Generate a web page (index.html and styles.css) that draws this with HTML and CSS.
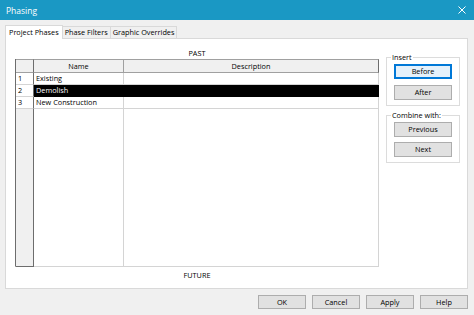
FILE: index.html
```html
<!DOCTYPE html>
<html>
<head>
<meta charset="utf-8">
<link rel="stylesheet" href="styles.css">
</head>
<body>
<div class="window">
  <div class="titlebar">
    <span class="title">Phasing</span>
    <svg class="close" width="8" height="8" viewBox="0 0 8 8"><path d="M0.5 0.5L7.5 7.5M7.5 0.5L0.5 7.5" stroke="#fff" stroke-width="1"/></svg>
  </div>
  <div class="tabs">
    <div class="tab active">Project Phases</div>
    <div class="tab">Phase Filters</div>
    <div class="tab">Graphic Overrides</div>
  </div>
  <div class="panel">
    <div class="main">
      <div class="caption">PAST</div>
      <div class="grid">
        <div class="hc corner"></div>
        <div class="hc">Name</div>
        <div class="hc last">Description</div>

        <div class="rn">1</div>
        <div class="c">Existing</div>
        <div class="c">&nbsp;</div>

        <div class="rn">2</div>
        <div class="c sel">Demolish</div>
        <div class="c sel">&nbsp;</div>

        <div class="rn">3</div>
        <div class="c">New Construction</div>
        <div class="c">&nbsp;</div>

        <div class="fill rnf"></div>
        <div class="fill"></div>
        <div class="fill"></div>
      </div>
      <div class="caption future">FUTURE</div>
    </div>
    <div class="side">
      <fieldset class="group g1">
        <legend>Insert</legend>
        <div class="btn focus">Before</div>
        <div class="btn">After</div>
      </fieldset>
      <fieldset class="group">
        <legend>Combine with:</legend>
        <div class="btn">Previous</div>
        <div class="btn">Next</div>
      </fieldset>
    </div>
  </div>
  <div class="footer">
    <div class="btn wide">OK</div>
    <div class="btn wide">Cancel</div>
    <div class="btn wide">Apply</div>
    <div class="btn wide">Help</div>
  </div>
</div>
</body>
</html>
```
FILE: styles.css
```css
html, body {
  margin: 0;
  padding: 0;
}
body {
  width: 474px;
  height: 315px;
  overflow: hidden;
  background: #f0f0f0;
  font-family: "Open Sans", "Noto Sans", sans-serif;
  font-size: 7.3px;
  color: #000;
}
.window {
  width: 474px;
  height: 315px;
  display: flex;
  flex-direction: column;
}
.titlebar {
  height: 20px;
  background: #1a98c4;
  display: flex;
  align-items: center;
  justify-content: space-between;
  padding: 0 8px 0 6px;
  box-sizing: border-box;
  flex: none;
}
.title {
  color: #fff;
  font-size: 8.5px;
}
.tabs {
  display: flex;
  align-items: flex-end;
  height: 13px;
  margin-top: 5px;
  padding-left: 5px;
  flex: none;
  position: relative;
  z-index: 1;
}
.tab {
  height: 11px;
  line-height: 11px;
  padding: 0 2px;
  border: 1px solid #d9d9d9;
  border-bottom: none;
  background: #f0f0f0;
  margin-left: -1px;
  white-space: nowrap;
}
.tab.active {
  height: 13px;
  line-height: 12px;
  background: #fff;
  margin-left: 0;
  padding: 0 3px;
  margin-bottom: -1px;
}
.panel {
  height: 251px;
  margin: 0 6px 0 5px;
  background: #fff;
  border: 1px solid #d9d9d9;
  box-sizing: border-box;
  display: flex;
  flex: none;
}
.main {
  width: 364px;
  margin-left: 9px;
  display: flex;
  flex-direction: column;
}
.caption {
  text-align: center;
  height: 20px;
  line-height: 8px;
  padding-top: 10px;
  box-sizing: border-box;
}
.caption.future {
  height: 14px;
  padding-top: 4px;
}
.grid {
  height: 208px;
  display: grid;
  grid-template-columns: 18px 90px 255px;
  grid-template-rows: 14px 12px 12px 12px 1fr;
  border-left: 1px solid #6d6d6d;
  border-bottom: 1px solid #d4d4d4;
  box-sizing: border-box;
}
.hc {
  background: #f0f0f0;
  border-top: 1px solid #a0a0a0;
  border-right: 1px solid #a0a0a0;
  border-bottom: 1px solid #a0a0a0;
  text-align: center;
  line-height: 12px;
  box-sizing: border-box;
}
.hc.corner {
  border-right: 1px solid #6d6d6d;
}
.hc.last {
  border-right: 1px solid #6d6d6d;
}
.rn {
  border-right: 1px solid #6d6d6d;
  border-bottom: 1px solid #d4d4d4;
  padding-left: 2px;
  line-height: 11px;
  box-sizing: border-box;
  background: #fff;
}
.c {
  border-right: 1px solid #d4d4d4;
  border-bottom: 1px solid #d4d4d4;
  padding-left: 2px;
  line-height: 11px;
  box-sizing: border-box;
  white-space: nowrap;
}
.c.sel {
  background: #000;
  color: #fff;
  border-right-color: #000;
  border-bottom-color: #000;
}
.fill {
  border-right: 1px solid #d4d4d4;
}
.fill.rnf {
  background: #f0f0f0;
  border-right: 1px solid #6d6d6d;
  border-bottom: 1px solid #6d6d6d;
  margin-bottom: -1px;
}
.side {
  margin-left: 7px;
  padding-top: 14px;
  width: 74px;
  display: flex;
  flex-direction: column;
  gap: 5px;
}
.group {
  margin: 0;
  padding: 3px 7px 5px 7px;
  border: 1px solid #dcdcdc;
  display: flex;
  flex-direction: column;
  gap: 5px;
  box-sizing: border-box;
  width: 74px;
}
.group.g1 {
  gap: 6px;
}
.group legend {
  padding: 0 1px;
  margin-left: -3px;
  line-height: 8px;
}
.btn {
  height: 15px;
  line-height: 13px;
  text-align: center;
  background: #e1e1e1;
  border: 1px solid #adadad;
  box-sizing: border-box;
}
.btn.focus {
  border: 1px solid #0078d7;
  box-shadow: inset 0 0 0 1px #0078d7;
  background: #e5f1fb;
}
.footer {
  display: flex;
  justify-content: flex-end;
  gap: 6px;
  padding-right: 6px;
  padding-top: 6px;
}
.btn.wide {
  width: 48px;
  height: 14px;
  line-height: 12px;
}
```
